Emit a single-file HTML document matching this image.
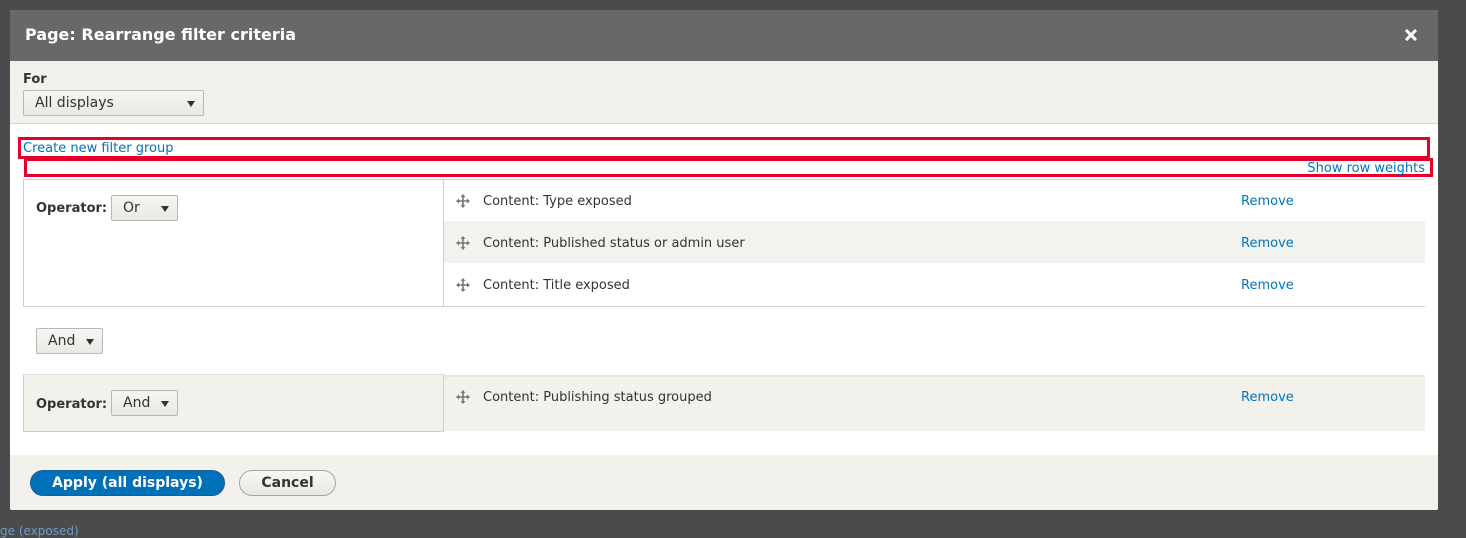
<!DOCTYPE html>
<html><head><style>
*{box-sizing:border-box;margin:0;padding:0}
body{width:1466px;height:538px;background:#4b4b4b;font-family:"DejaVu Sans","Liberation Sans",sans-serif;position:relative;overflow:hidden;font-size:13px;color:#333}
.abs{position:absolute}
.dlg{left:10px;top:10px;width:1428px;height:500px;background:#fff;border-radius:2px;overflow:hidden}
.hdr{left:0;top:0;width:1428px;height:51px;background:#686868;color:#fff;font-weight:bold;font-size:16px;padding:15px 15px}
.sel{position:absolute;border:1px solid #b8b8b8;border-radius:2px;background:linear-gradient(#f6f6f3,#e8e8e4);font-size:14px;color:#333;padding:0 0 0 11px;line-height:25px;height:26px}
.sel:after{content:"";position:absolute;right:8px;top:10px;border-left:4px solid transparent;border-right:4px solid transparent;border-top:6px solid #333}
a{color:#0074bd;text-decoration:none}
.red{position:absolute;border:3px solid #e4002b}
.row{position:absolute;left:434px;width:981px;height:42px;font-size:13px}
.row .t{position:absolute;left:39px;top:15px}
.row .r{position:absolute;left:797px;top:15px;color:#0074bd}
.mv{position:absolute;left:12px;top:15px;width:14px;height:14px}
.btn{position:absolute;border-radius:14px;font-weight:bold;font-size:14px;text-align:center;line-height:25px;height:26px}
</style></head><body>
<div class="abs" style="left:0;top:524px;font-size:12px;color:#6e9cc8">ge (exposed)</div>
<div class="abs dlg">
 <div class="abs hdr">Page: Rearrange filter criteria<svg style="position:absolute;right:21px;top:19px" width="12" height="12" viewBox="0 0 12 12"><path d="M1 1L11 11M11 1L1 11" stroke="#fff" stroke-width="3"/></svg></div>
 <div class="abs" style="left:0;top:51px;width:1428px;height:63px;background:#f2f1eb;border-bottom:1px solid #d4d4d0"></div>
 <div class="abs" style="left:13px;top:62px;font-weight:bold;font-size:13px">For</div>
 <div class="sel" style="left:13px;top:80px;width:181px">All displays</div>
 <div class="red" style="left:8px;top:127px;width:1412px;height:22px"></div>
 <div class="abs" style="left:13px;top:131px"><a>Create new filter group</a></div>
 <div class="red" style="left:14px;top:148px;width:1409px;height:19px"></div>
 <div class="abs" style="right:13px;top:151px"><a>Show row weights</a></div>
 <div class="abs" style="left:13px;top:169px;width:1402px;height:1px;background:#e8c0c8"></div>
 <div class="abs" style="left:13px;top:169px;width:421px;height:128px;border:1px solid #cfcfcb;border-top:none"></div>
 <div class="abs" style="left:26px;top:191px;font-weight:bold">Operator:</div>
 <div class="sel" style="left:101px;top:185px;width:67px">Or</div>
 <div class="abs" style="left:433px;top:169px;width:982px;height:128px;border-left:1px solid #cfcfcb;border-bottom:1px solid #cfcfcb"></div>
 <div class="row" style="top:169px"><svg class="mv" viewBox="0 0 14 14"><path d="M7 0L9.5 3H4.5ZM7 14L4.5 11H9.5ZM0 7L3 4.5V9.5ZM14 7L11 9.5V4.5ZM6.2 2H7.8V12H6.2ZM2 6.2H12V7.8H2Z" fill="#777"/></svg><span class="t">Content: Type exposed</span><span class="r">Remove</span></div>
 <div class="row" style="top:211px;background:#f2f2ee"><svg class="mv" viewBox="0 0 14 14"><path d="M7 0L9.5 3H4.5ZM7 14L4.5 11H9.5ZM0 7L3 4.5V9.5ZM14 7L11 9.5V4.5ZM6.2 2H7.8V12H6.2ZM2 6.2H12V7.8H2Z" fill="#777"/></svg><span class="t">Content: Published status or admin user</span><span class="r">Remove</span></div>
 <div class="row" style="top:253px"><svg class="mv" viewBox="0 0 14 14"><path d="M7 0L9.5 3H4.5ZM7 14L4.5 11H9.5ZM0 7L3 4.5V9.5ZM14 7L11 9.5V4.5ZM6.2 2H7.8V12H6.2ZM2 6.2H12V7.8H2Z" fill="#777"/></svg><span class="t">Content: Title exposed</span><span class="r">Remove</span></div>
 <div class="sel" style="left:26px;top:318px;width:67px">And</div>
 <div class="abs" style="left:13px;top:364px;width:421px;height:58px;background:#f2f1eb;border:1px solid #cfcfcb;border-top:1px solid #e0e0dc"></div>
 <div class="abs" style="left:434px;top:365px;width:981px;height:56px;background:#f2f1eb;border-top:2px solid #e6e6e2"></div>
 <div class="abs" style="left:26px;top:387px;font-weight:bold">Operator:</div>
 <div class="sel" style="left:101px;top:380px;width:67px">And</div>
 <div class="row" style="top:365px;background:transparent"><svg class="mv" viewBox="0 0 14 14"><path d="M7 0L9.5 3H4.5ZM7 14L4.5 11H9.5ZM0 7L3 4.5V9.5ZM14 7L11 9.5V4.5ZM6.2 2H7.8V12H6.2ZM2 6.2H12V7.8H2Z" fill="#777"/></svg><span class="t">Content: Publishing status grouped</span><span class="r">Remove</span></div>
 <div class="abs" style="left:0;top:445px;width:1428px;height:55px;background:#f2f1eb"></div>
 <div class="btn" style="left:20px;top:460px;width:195px;background:#0071b8;color:#fff;border:1px solid #1e5c90">Apply (all displays)</div>
 <div class="btn" style="left:229px;top:460px;width:97px;background:linear-gradient(#f6f6f3,#e8e8e4);color:#333;border:1px solid #a6a6a6">Cancel</div>
</div>
</body></html>
